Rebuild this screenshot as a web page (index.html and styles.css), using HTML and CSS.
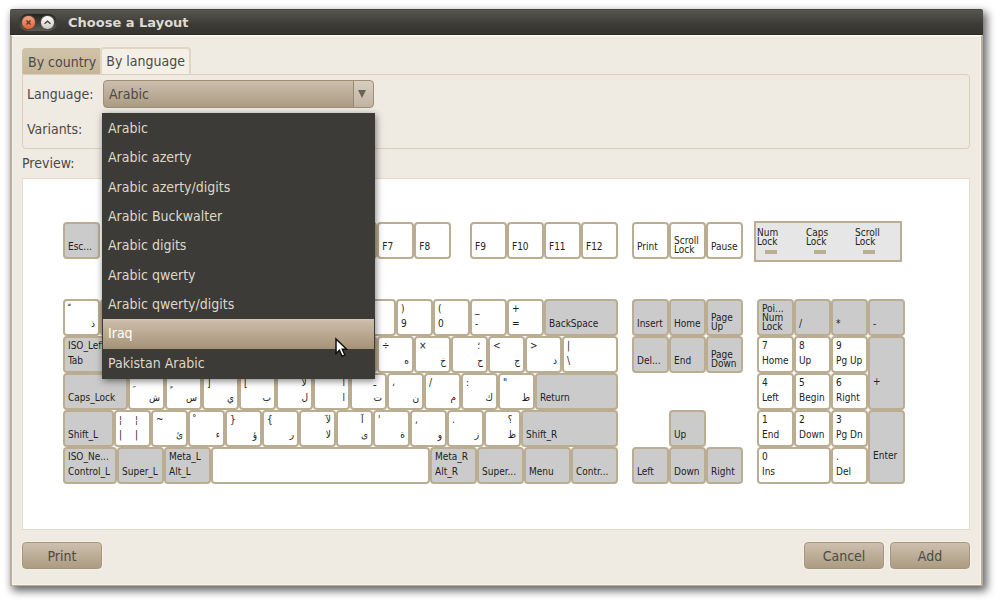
FILE: index.html
```html
<!DOCTYPE html>
<html lang="en">
<head>
  <meta charset="UTF-8" />
  <meta name="viewport" content="width=device-width, initial-scale=1.0">
  <title>Choose a Layout</title>
  <link rel="stylesheet" href="styles.css">
</head>
<body>

  <main class="window">
    <header class="title-bar">
      <div class="window-buttons">
        <button class="win-btn close" aria-label="Close">
          <svg viewBox="0 0 14 14"><path d="M4.8 4.8l4.4 4.4M9.2 4.8l-4.4 4.4"/></svg>
        </button>
        <button class="win-btn" aria-label="Roll up">
          <svg viewBox="0 0 14 14"><path d="M3.8 8.4L7 5.6l3.2 2.8"/></svg>
        </button>
      </div>
      <h1>Choose a Layout</h1>
    </header>

    <div class="content">
      <div class="tabs" role="tablist">
        <button class="tab" role="tab">By country</button>
        <button class="tab active" role="tab">By language</button>
      </div>

      <section class="panel">
        <label for="language">Language:</label>
        <div class="combo">
          <select id="language">
            <option>Arabic</option>
          </select>
          <svg class="arrow" viewBox="0 0 8 8"><path d="M0 0h8L4 8z"/></svg>
          <ul class="menu" role="listbox" aria-label="Language">
            <li role="option">Arabic</li>
            <li role="option">Arabic azerty</li>
            <li role="option">Arabic azerty/digits</li>
            <li role="option">Arabic Buckwalter</li>
            <li role="option">Arabic digits</li>
            <li role="option">Arabic qwerty</li>
            <li role="option">Arabic qwerty/digits</li>
            <li role="option" class="selected">Iraq
              <svg class="cursor" viewBox="0 0 14 21"><path d="M2 2v14.5l3.4-3.2 2.7 6 2.8-1.3-2.6-5.7h4.4z"/></svg>
            </li>
            <li role="option">Pakistan Arabic</li>
          </ul>
        </div>
        <label for="variants">Variants:</label>
        <div class="combo">
          <select id="variants"></select>
        </div>
      </section>

      <p class="preview-label">Preview:</p>

      <section class="preview">
        <div class="block main">
          <div class="row top">
            <div class="key mod"><span class="bl">Esc...</span></div>
            <div class="group first">
              <div class="key"></div>
              <div class="key"></div>
              <div class="key"></div>
              <div class="key"></div>
            </div>
            <div class="group">
              <div class="key"></div>
              <div class="key"></div>
              <div class="key"><span class="bl">F7</span></div>
              <div class="key"><span class="bl">F8</span></div>
            </div>
            <div class="group">
              <div class="key"><span class="bl">F9</span></div>
              <div class="key"><span class="bl">F10</span></div>
              <div class="key"><span class="bl">F11</span></div>
              <div class="key"><span class="bl">F12</span></div>
            </div>
          </div>

          <div class="row">
            <div class="key"><span class="tl">ﹼ</span><span class="br">ذ</span></div>
            <div class="key"></div>
            <div class="key"></div>
            <div class="key"></div>
            <div class="key"></div>
            <div class="key"></div>
            <div class="key"></div>
            <div class="key"></div>
            <div class="key"></div>
            <div class="key"><span class="tl">)</span><span class="bl">9</span></div>
            <div class="key"><span class="tl">(</span><span class="bl">0</span></div>
            <div class="key"><span class="tl">_</span><span class="bl">-</span></div>
            <div class="key"><span class="tl">+</span><span class="bl">=</span></div>
            <div class="key mod fill"><span class="bl">BackSpace</span></div>
          </div>

          <div class="row">
            <div class="key mod tab-key"><span class="tl">ISO_Left</span><span class="bl">Tab</span></div>
            <div class="key"></div>
            <div class="key"></div>
            <div class="key"></div>
            <div class="key"></div>
            <div class="key"></div>
            <div class="key"></div>
            <div class="key"></div>
            <div class="key"><span class="tl">÷</span><span class="br">ه</span></div>
            <div class="key"><span class="tl">×</span><span class="br">خ</span></div>
            <div class="key"><span class="tr">؛</span><span class="br">ح</span></div>
            <div class="key"><span class="tl">&lt;</span><span class="br">ج</span></div>
            <div class="key"><span class="tl">&gt;</span><span class="br">د</span></div>
            <div class="key fill"><span class="tl">|</span><span class="bl">\</span></div>
          </div>

          <div class="row">
            <div class="key mod caps"><span class="bl">Caps_Lock</span></div>
            <div class="key"><span class="tl">ﹺ</span><span class="br">ش</span></div>
            <div class="key"><span class="tl">ﹴ</span><span class="br">س</span></div>
            <div class="key"><span class="tl">]</span><span class="br">ي</span></div>
            <div class="key"><span class="tl">[</span><span class="br">ب</span></div>
            <div class="key"><span class="tr">لأ</span><span class="br">ل</span></div>
            <div class="key"><span class="tr">أ</span><span class="br">ا</span></div>
            <div class="key"><span class="tr">ـ</span><span class="br">ت</span></div>
            <div class="key"><span class="tl">،</span><span class="br">ن</span></div>
            <div class="key"><span class="tl">/</span><span class="br">م</span></div>
            <div class="key"><span class="tl">:</span><span class="br">ك</span></div>
            <div class="key"><span class="tl">"</span><span class="br">ط</span></div>
            <div class="key mod fill"><span class="bl">Return</span></div>
          </div>

          <div class="row">
            <div class="key mod shift"><span class="bl">Shift_L</span></div>
            <div class="key four"><span class="tl">¦</span><span class="tr">¦</span><span class="bl">|</span><span class="br">|</span></div>
            <div class="key"><span class="tl">~</span><span class="br">ئ</span></div>
            <div class="key"><span class="tl">ﹾ</span><span class="br">ء</span></div>
            <div class="key"><span class="tl">}</span><span class="br">ؤ</span></div>
            <div class="key"><span class="tl">{</span><span class="br">ر</span></div>
            <div class="key"><span class="tr">لآ</span><span class="br">لا</span></div>
            <div class="key"><span class="tr">آ</span><span class="br">ى</span></div>
            <div class="key"><span class="tl">'</span><span class="br">ة</span></div>
            <div class="key"><span class="tl">,</span><span class="br">و</span></div>
            <div class="key"><span class="tl">.</span><span class="br">ز</span></div>
            <div class="key"><span class="tr">؟</span><span class="br">ظ</span></div>
            <div class="key mod fill"><span class="bl">Shift_R</span></div>
          </div>

          <div class="row">
            <div class="key mod control"><span class="tl">ISO_Ne...</span><span class="bl">Control_L</span></div>
            <div class="key mod wide"><span class="bl">Super_L</span></div>
            <div class="key mod wide"><span class="tl">Meta_L</span><span class="bl">Alt_L</span></div>
            <div class="key fill"></div>
            <div class="key mod wide"><span class="tl">Meta_R</span><span class="bl">Alt_R</span></div>
            <div class="key mod wide"><span class="bl">Super...</span></div>
            <div class="key mod wide"><span class="bl">Menu</span></div>
            <div class="key mod wide"><span class="bl">Contr...</span></div>
          </div>
        </div>

        <div class="block nav">
          <div class="row top">
            <div class="key"><span class="bl">Print</span></div>
            <div class="key"><span class="stack">Scroll<br>Lock</span></div>
            <div class="key"><span class="bl">Pause</span></div>
          </div>
          <div class="row">
            <div class="key mod"><span class="bl">Insert</span></div>
            <div class="key mod"><span class="bl">Home</span></div>
            <div class="key mod"><span class="stack">Page<br>Up</span></div>
          </div>
          <div class="row">
            <div class="key mod"><span class="bl">Del...</span></div>
            <div class="key mod"><span class="bl">End</span></div>
            <div class="key mod"><span class="stack">Page<br>Down</span></div>
          </div>
          <div class="row up">
            <div class="key mod"><span class="bl">Up</span></div>
          </div>
          <div class="row">
            <div class="key mod"><span class="bl">Left</span></div>
            <div class="key mod"><span class="bl">Down</span></div>
            <div class="key mod"><span class="bl">Right</span></div>
          </div>
        </div>

        <div class="block">
          <div class="leds">
            <span class="led">Num<br>Lock</span>
            <span class="led">Caps<br>Lock</span>
            <span class="led">Scroll<br>Lock</span>
          </div>
          <div class="numpad">
            <div class="key mod"><span class="stack">Poi...<br>Num<br>Lock</span></div>
            <div class="key mod"><span class="bl">/</span></div>
            <div class="key mod"><span class="bl">*</span></div>
            <div class="key mod"><span class="bl">-</span></div>
            <div class="key"><span class="tl">7</span><span class="bl">Home</span></div>
            <div class="key"><span class="tl">8</span><span class="bl">Up</span></div>
            <div class="key"><span class="tl">9</span><span class="bl">Pg Up</span></div>
            <div class="key mod tall"><span>+</span></div>
            <div class="key"><span class="tl">4</span><span class="bl">Left</span></div>
            <div class="key"><span class="tl">5</span><span class="bl">Begin</span></div>
            <div class="key"><span class="tl">6</span><span class="bl">Right</span></div>
            <div class="key"><span class="tl">1</span><span class="bl">End</span></div>
            <div class="key"><span class="tl">2</span><span class="bl">Down</span></div>
            <div class="key"><span class="tl">3</span><span class="bl">Pg Dn</span></div>
            <div class="key mod tall"><span>Enter</span></div>
            <div class="key zero"><span class="tl">0</span><span class="bl">Ins</span></div>
            <div class="key"><span class="tl">.</span><span class="bl">Del</span></div>
          </div>
        </div>
      </section>

      <footer class="actions">
        <button class="btn">Print</button>
        <button class="btn push">Cancel</button>
        <button class="btn">Add</button>
      </footer>
    </div>
  </main>

</body>
</html>
```
FILE: styles.css
```css
* {
  box-sizing: border-box;
}

body {
  margin: 0;
  min-height: 100vh;
  padding: 9px 17px 17px 10px;
  display: flex;
  background-color: #fff;
  color: #4c4a46;
  font-family: "DejaVu Sans Condensed", "DejaVu Sans", sans-serif;
  font-size: 14px;
}

button, select {
  font: inherit;
  color: inherit;
}

.window {
  flex: 1;
  display: flex;
  flex-direction: column;
  background-color: #efebe3;
  border-radius: 2px;
  box-shadow: 3px 4px 9px 1px rgba(0, 0, 0, 0.6);
}

/* title bar */
.title-bar {
  height: 26px;
  padding-left: 9px;
  display: flex;
  align-items: center;
  gap: 11px;
  background: linear-gradient(#57564e, #3c3b37 60%, #35342f);
  border-top: 1px solid #46453f;
  border-bottom: 1px solid #2a2926;
  border-radius: 2px 2px 0 0;
}

.title-bar h1 {
  margin: 0;
  font-family: "DejaVu Sans", sans-serif;
  font-size: 13px;
  color: #dfdbd2;
}

.window-buttons {
  display: flex;
  gap: 4px;
  padding: 1px 2px;
  border-radius: 9px;
  background: linear-gradient(#24231f, #5c5b54);
}

.win-btn {
  width: 15px;
  height: 15px;
  padding: 0;
  border: 1px solid #4a4943;
  border-radius: 50%;
  background: linear-gradient(#fff, #cfcbc2);
}

.win-btn.close {
  background: linear-gradient(#f9a184, #e4602f);
}

.win-btn svg {
  display: block;
  width: 13px;
  height: 13px;
  fill: none;
  stroke: #4a4038;
  stroke-width: 1.4;
}

.content {
  flex: 1;
  display: flex;
  flex-direction: column;
  padding: 11px 11px 16px 10px;
  border: 2px solid #b9ae99;
  border-top: 1px solid #fffdf6;
  border-bottom-width: 1px;
  box-shadow: inset 0 0 0 1px #f8f3e8;
}

/* notebook */
.tabs {
  display: flex;
  align-items: flex-end;
}

.tab {
  height: 26px;
  padding: 0 4px 0 5px;
  border: 1px solid #cfc2a8;
  border-right: none;
  border-bottom: none;
  border-radius: 4px 0 0 0;
  background: linear-gradient(#d0c3aa, #c5b698);
}

.tab.active {
  height: 28px;
  margin-bottom: -1px;
  padding: 0 4px 2px;
  border: 2px solid #e0d6c1;
  border-bottom: none;
  border-radius: 4px 4px 0 0;
  background: #f4f0e8;
}

.panel {
  display: grid;
  grid-template-columns: 76px 271px;
  grid-auto-rows: 28px;
  row-gap: 7px;
  align-items: center;
  padding: 5px 4px;
  border: 1px solid #d9cfba;
  border-radius: 0 4px 4px 4px;
}

.combo {
  position: relative;
}

.combo select {
  display: block;
  width: 100%;
  height: 28px;
  padding: 0 5px;
  appearance: none;
  border: 1px solid #a08f74;
  border-radius: 4px;
  background: linear-gradient(to right, transparent 249px, #99896f 249px, #99896f 250px, rgba(255, 255, 255, 0.25) 250px), linear-gradient(#cbbeac, #ab9b82);
}

.arrow {
  position: absolute;
  top: 10px;
  right: 8px;
  width: 8px;
  height: 8px;
  fill: #6b6253;
}

.menu {
  position: absolute;
  z-index: 2;
  top: 33px;
  left: -1px;
  right: -1px;
  display: flex;
  flex-direction: column;
  height: 266px;
  margin: 0;
  padding: 1px;
  list-style: none;
  background-color: #3c3b37;
  color: #dfd8c8;
  box-shadow: 1px 2px 7px rgba(0, 0, 0, 0.5);
}

.menu li {
  flex: 1;
  padding-left: 5px;
  line-height: 29px;
}

.menu .selected {
  position: relative;
  color: #fff;
  background: linear-gradient(#d8cab8, #cbbba9 2px, #a69376);
}

.cursor {
  position: absolute;
  top: 18px;
  right: 26px;
  width: 14px;
  height: 21px;
  z-index: 1;
  fill: #fff;
  stroke: #111;
  stroke-width: 1.5;
}

.preview-label {
  margin: 0 0 1px;
  line-height: 28px;
}

/* keyboard */
.preview {
  flex: 1;
  display: flex;
  align-items: flex-start;
  gap: 14px;
  padding: 43px 40px;
  border: 1px solid #e3dac8;
  background-color: #fff;
  color: #222;
  font-size: 10px;
}

.main {
  flex: none;
  width: 555px;
}

.row, .group {
  display: flex;
}

.row.top {
  justify-content: space-between;
  margin-bottom: 40px;
}

.group.first {
  margin-left: 18px;
}

.row.up {
  margin-top: 37px;
  justify-content: center;
}

.key {
  flex: none;
  display: grid;
  grid-template: 15px 15px / auto auto;
  justify-content: space-between;
  width: 37px;
  height: 37px;
  padding-left: 3px;
  padding-right: 3px;
  border: 2px solid #bbad91;
  border-radius: 4px;
  background-color: #fff;
  line-height: 15px;
  white-space: nowrap;
}

.key.mod {
  background-color: #cbcbcb;
}

.nav .key,
.numpad .key {
  padding-right: 0;
}

.tl { grid-area: 1 / 1; }
.tr { grid-area: 1 / 2; }
.bl { grid-area: 2 / 1; }
.br { grid-area: 2 / 2; }

.four {
  padding-right: 11px;
}

.stack {
  grid-area: 1 / 1 / 3 / 2;
  align-self: end;
  line-height: 9px;
}

.tab-key { width: 55px; }
.caps { width: 65px; }
.shift { width: 51px; }
.control { width: 54px; }
.wide { width: 47px; }

.key.fill {
  flex: 1;
}

.leds {
  display: flex;
  width: 148px;
  height: 41px;
  margin: -1px 0 37px -3px;
  padding: 5px 1px;
  border: 2px solid #bbad91;
  background-color: #e6e6e6;
  line-height: 9px;
}

.led {
  flex: none;
  width: 49px;
}

.led::after {
  content: "";
  display: block;
  width: 12px;
  height: 4px;
  margin: 4px 0 0 8px;
  background-color: #bbad91;
}

.numpad {
  display: grid;
  grid-template-columns: repeat(4, 37px);
  grid-auto-rows: 37px;
}

.key.tall {
  grid-row: span 2;
  height: auto;
  grid-template: auto / auto;
  align-items: center;
  padding-top: 16px;
}

.key.zero {
  grid-column: span 2;
  width: auto;
}

/* bottom buttons */
.actions {
  display: flex;
  gap: 6px;
  padding-top: 12px;
}

.btn {
  width: 80px;
  height: 27px;
  padding: 0;
  border: 1px solid #a5967c;
  border-radius: 4px;
  background: linear-gradient(#cdc0ae, #ab9b81);
  box-shadow: 0 0 0 1px #f6f1e7;
}

.push {
  margin-left: auto;
}
```
